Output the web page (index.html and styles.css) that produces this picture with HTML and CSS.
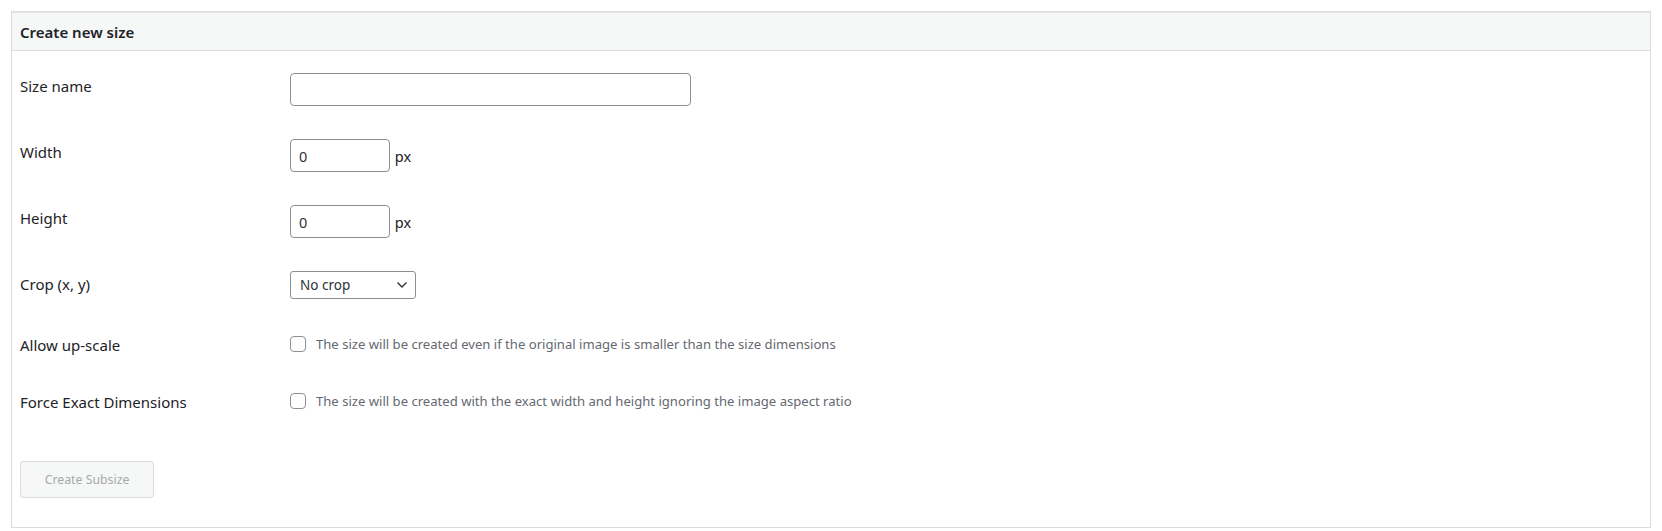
FILE: index.html
```html
<!DOCTYPE html>
<html lang="en">
<head>
    <meta charset="UTF-8">
    <meta name="viewport" content="width=device-width, initial-scale=1.0">
    <title>Create new size</title>
    <link rel="stylesheet" href="styles.css">
</head>
<body>

<div class="postbox">
    <div class="postbox-header">
        <h2>Create new size</h2>
    </div>

    <div class="inside">
        <table class="form-table">
            <tr>
                <th>Size name</th>
                <td><input type="text" class="regular-text" /></td>
            </tr>
            <tr>
                <th>Width</th>
                <td><input type="number" class="small-text" value="0" /> <span class="unit">px</span></td>
            </tr>
            <tr>
                <th>Height</th>
                <td><input type="number" class="small-text" value="0" /> <span class="unit">px</span></td>
            </tr>
            <tr>
                <th>Crop (x, y)</th>
                <td>
                    <span class="select-wrap">
                        <select>
                            <option>No crop</option>
                            <option>Left, top</option>
                            <option>Center, center</option>
                            <option>Right, bottom</option>
                        </select>
                        <!-- dropdown chevron -->
                        <svg class="chevron" width="12" height="8" viewBox="0 0 12 8">
                            <path d="M1.5 1.5 L6 6 L10.5 1.5" fill="none" stroke="#2c3338" stroke-width="1.4"/>
                        </svg>
                    </span>
                </td>
            </tr>
            <tr>
                <th>Allow up-scale</th>
                <td>
                    <label class="check">
                        <input type="checkbox" />
                        <span class="description">The size will be created even if the original image is smaller than the size dimensions</span>
                    </label>
                </td>
            </tr>
            <tr>
                <th>Force Exact Dimensions</th>
                <td>
                    <label class="check">
                        <input type="checkbox" />
                        <span class="description">The size will be created with the exact width and height ignoring the image aspect ratio</span>
                    </label>
                </td>
            </tr>
        </table>

        <button class="button" disabled>Create Subsize</button>
    </div>
</div>

</body>
</html>
```

FILE: styles.css
```css
body {
    margin: 0;
    background-color: #fff;
    color: #1d2327;
    font-family: "Noto Sans", "Open Sans", sans-serif;
}

.postbox {
    margin: 11px;
    border: 1px solid #dcdcde;
}

.postbox-header {
    height: 37px;
    padding: 0 8px;
    background-color: #f6f7f7;
    border-top: 1px solid #e4e5e7;
    border-bottom: 1px solid #dcdcde;
    display: flex;
    align-items: center;
}

.postbox-header h2 {
    margin: 0;
    font-size: 15px;
    font-weight: 600;
}

.inside {
    padding: 6px 8px 29px;
}

.form-table {
    border-collapse: collapse;
}

.form-table th {
    width: 270px;
    padding: 20px 0 0;
    text-align: left;
    vertical-align: top;
    font-size: 15px;
    font-weight: 400;
    line-height: 18px;
}

.form-table td {
    padding: 16px 0 17px;
    vertical-align: middle;
    font-size: 14.5px;
}

input[type="text"],
input[type="number"] {
    box-sizing: border-box;
    height: 33px;
    padding: 0 8px;
    border: 1px solid #8c8f94;
    border-radius: 4px;
    font-family: inherit;
    font-size: 14.5px;
    color: #2c3338;
    vertical-align: middle;
    margin: 0;
}

.regular-text {
    width: 401px;
}

.small-text {
    width: 100px;
    -moz-appearance: textfield;
}

.small-text::-webkit-inner-spin-button,
.small-text::-webkit-outer-spin-button {
    -webkit-appearance: none;
    margin: 0;
}

.unit {
    margin-left: 1px;
    vertical-align: middle;
}

.select-wrap {
    position: relative;
    display: inline-block;
    vertical-align: middle;
}

select {
    -webkit-appearance: none;
    appearance: none;
    box-sizing: border-box;
    width: 126px;
    height: 28px;
    padding: 0 24px 0 9px;
    border: 1px solid #8c8f94;
    border-radius: 3px;
    background-color: #fff;
    font-family: inherit;
    font-size: 13.5px;
    color: #2c3338;
    display: block;
}

.chevron {
    position: absolute;
    right: 8px;
    top: 10px;
    pointer-events: none;
}

.check {
    display: flex;
    align-items: center;
    height: 24px;
}

input[type="checkbox"] {
    -webkit-appearance: none;
    appearance: none;
    box-sizing: border-box;
    width: 16px;
    height: 16px;
    margin: 0 10px 0 0;
    border: 1px solid #8c8f94;
    border-radius: 4px;
    background-color: #fff;
}

.description {
    font-size: 13.1px;
    color: #646970;
}

.button {
    margin-top: 31px;
    width: 134px;
    height: 37px;
    border: 1px solid #dcdcde;
    border-radius: 3px;
    background-color: #f6f7f7;
    color: #a7aaad;
    font-family: inherit;
    font-size: 12.3px;
}
```
